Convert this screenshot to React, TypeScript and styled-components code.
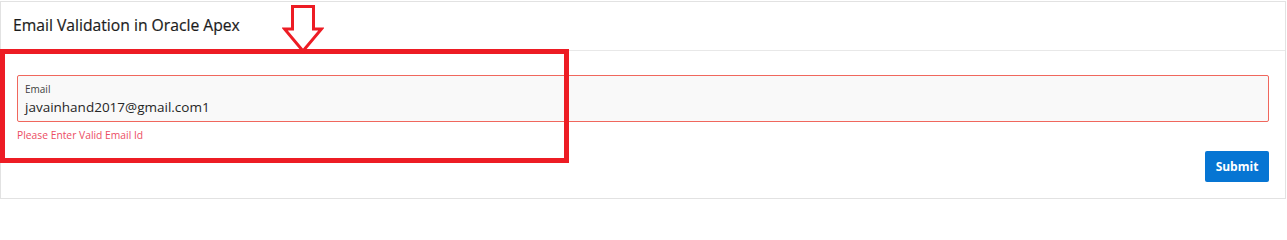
import React from "react";
import styled, { createGlobalStyle } from "styled-components";

const GlobalStyle = createGlobalStyle`
  html, body { margin: 0; padding: 0; background: #ffffff; }
  body { font-family: "Open Sans", "Noto Sans", Arial, sans-serif; }
  * { box-sizing: border-box; }
`;

const Page = styled.div`
  position: relative;
  width: 1287px;
  height: 200px;
  padding-top: 1px;
`;

const Card = styled.section`
  width: 1286px;
  height: 198px;
  border: 1px solid #e2e2e2;
  background: #ffffff;
  display: flex;
  flex-direction: column;
`;

const Header = styled.header`
  height: 49px;
  border-bottom: 1px solid #e8e8e8;
  display: flex;
  align-items: center;
  padding: 0 12px 3px;
`;

const Title = styled.h2`
  margin: 0;
  font-size: 15.7px;
  font-weight: 400;
  color: #1c1c1c;
  letter-spacing: 0;
  -webkit-text-stroke: 0.2px #1c1c1c;
`;

const Body = styled.div`
  flex: 1;
  padding: 24px 16px 0 16px;
  display: flex;
  flex-direction: column;
`;

const Field = styled.div<{ $error?: boolean }>`
  height: 47px;
  border: 1px solid ${(p) => (p.$error ? "#f0675d" : "#dfdfdf")};
  border-radius: 2px;
  background: #f9f9f9;
  padding: 7px 7px 0;
  display: flex;
  flex-direction: column;
`;

const Label = styled.label`
  font-size: 10px;
  line-height: 13px;
  color: #404040;
`;

const Value = styled.div`
  font-size: 13.5px;
  line-height: 20px;
  color: #262626;
  margin-top: 1px;
`;

const ErrorText = styled.div`
  font-size: 10.3px;
  line-height: 14px;
  color: #ec4d63;
  margin-top: 6px;
`;

const Actions = styled.div`
  display: flex;
  justify-content: flex-end;
  margin-top: 9px;
`;

const Button = styled.button`
  width: 64px;
  height: 31px;
  border: none;
  border-radius: 2px;
  background: #0675d3;
  color: #ffffff;
  font-family: "Open Sans", "Noto Sans", Arial, sans-serif;
  font-size: 12px;
  font-weight: 700;
  padding: 0;
  cursor: pointer;
`;

const Highlight = styled.div`
  position: absolute;
  left: 0;
  top: 49px;
  width: 569px;
  height: 114px;
  border: 5px solid #ed1c24;
  pointer-events: none;
`;

const Arrow = styled.svg`
  position: absolute;
  left: 282px;
  top: 5px;
  pointer-events: none;
`;

export default function App() {
  return (
    <>
      <GlobalStyle />
      <Page>
        <Card>
          <Header>
            <Title>Email Validation in Oracle Apex</Title>
          </Header>
          <Body>
            <Field $error>
              <Label>Email</Label>
              <Value>javainhand2017@gmail.com1</Value>
            </Field>
            <ErrorText>Please Enter Valid Email Id</ErrorText>
            <Actions>
              <Button>Submit</Button>
            </Actions>
          </Body>
        </Card>
        <Highlight />
        <Arrow width="42" height="48" viewBox="0 0 42 48">
          <path
            d="M10.5 1.5 H31.5 V24 H39.5 L21 46 L2.5 24 H10.5 Z"
            fill="#ffffff"
            stroke="#ed1c24"
            strokeWidth="3"
            strokeLinejoin="miter"
          />
        </Arrow>
      </Page>
    </>
  );
}
